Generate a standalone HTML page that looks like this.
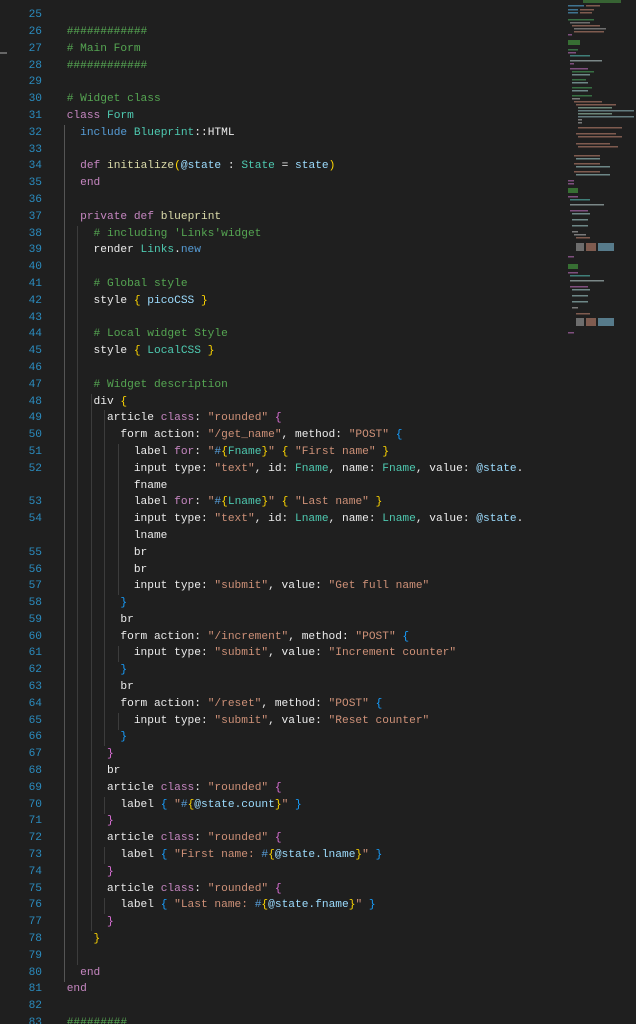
<!DOCTYPE html>
<html><head><meta charset="utf-8">
<style>
html,body{margin:0;padding:0;background:#1f1f1f;width:636px;height:1024px;overflow:hidden}
#wrap{position:relative;width:636px;height:1024px;overflow:hidden;font-family:"Liberation Mono",monospace;font-size:11.2px}
#nums{position:absolute;left:0;top:-9.6px;width:42px;text-align:right;color:#2b8cbf}
#code{position:absolute;left:66.7px;top:-9.6px;color:#ececec}
.r{height:16.8px;line-height:16.8px;white-space:pre}
.c{color:#55a552}.k{color:#c586c0}.t{color:#4ec9b0}.s{color:#ce9178}.f{color:#dcdcaa}
.v{color:#9cdcfe}.b{color:#569cd6}.g{color:#ffd700}.p{color:#da70d6}.u{color:#179fff}
.gd{position:absolute;width:1px;background:#3c3c3c}
</style></head><body><div id="wrap">
<div class="gd" style="left:64px;top:124.8px;height:857px;background:#555"></div>
<div class="gd" style="left:77.4px;top:225.6px;height:739px"></div>
<div class="gd" style="left:90.9px;top:393.6px;height:537.6px"></div>
<div class="gd" style="left:104.3px;top:410.4px;height:336px"></div>
<div class="gd" style="left:104.3px;top:796.8px;height:16.8px"></div>
<div class="gd" style="left:104.3px;top:847.2px;height:16.8px"></div>
<div class="gd" style="left:104.3px;top:897.6px;height:16.8px"></div>
<div class="gd" style="left:117.8px;top:444px;height:151.2px"></div>
<div class="gd" style="left:117.8px;top:645.6px;height:16.8px"></div>
<div class="gd" style="left:117.8px;top:712.8px;height:16.8px"></div>
<div style="position:absolute;left:0;top:52px;width:7px;height:2px;background:#666"></div>
<div id="nums">
<div class="r">24</div><div class="r">25</div><div class="r">26</div><div class="r">27</div><div class="r">28</div><div class="r">29</div><div class="r">30</div><div class="r">31</div><div class="r">32</div><div class="r">33</div><div class="r">34</div><div class="r">35</div><div class="r">36</div><div class="r">37</div><div class="r">38</div><div class="r">39</div><div class="r">40</div><div class="r">41</div><div class="r">42</div><div class="r">43</div><div class="r">44</div><div class="r">45</div><div class="r">46</div><div class="r">47</div><div class="r">48</div><div class="r">49</div><div class="r">50</div><div class="r">51</div><div class="r">52</div><div class="r"></div><div class="r">53</div><div class="r">54</div><div class="r"></div><div class="r">55</div><div class="r">56</div><div class="r">57</div><div class="r">58</div><div class="r">59</div><div class="r">60</div><div class="r">61</div><div class="r">62</div><div class="r">63</div><div class="r">64</div><div class="r">65</div><div class="r">66</div><div class="r">67</div><div class="r">68</div><div class="r">69</div><div class="r">70</div><div class="r">71</div><div class="r">72</div><div class="r">73</div><div class="r">74</div><div class="r">75</div><div class="r">76</div><div class="r">77</div><div class="r">78</div><div class="r">79</div><div class="r">80</div><div class="r">81</div><div class="r">82</div><div class="r">83</div>
</div>
<div id="code">
<div class="r"> </div>
<div class="r"> </div>
<div class="r"><span class="c">############</span></div>
<div class="r"><span class="c"># Main Form</span></div>
<div class="r"><span class="c">############</span></div>
<div class="r"> </div>
<div class="r"><span class="c"># Widget class</span></div>
<div class="r"><span class="k">class</span> <span class="t">Form</span></div>
<div class="r">  <span class="b">include</span> <span class="t">Blueprint</span>::HTML</div>
<div class="r"> </div>
<div class="r">  <span class="k">def</span> <span class="f">initialize</span><span class="g">(</span><span class="v">@state</span> : <span class="t">State</span> = <span class="v">state</span><span class="g">)</span></div>
<div class="r">  <span class="k">end</span></div>
<div class="r"> </div>
<div class="r">  <span class="k">private</span> <span class="k">def</span> <span class="f">blueprint</span></div>
<div class="r">    <span class="c"># including 'Links'widget</span></div>
<div class="r">    render <span class="t">Links</span>.<span class="b">new</span></div>
<div class="r"> </div>
<div class="r">    <span class="c"># Global style</span></div>
<div class="r">    style <span class="g">{</span> <span class="v">picoCSS</span> <span class="g">}</span></div>
<div class="r"> </div>
<div class="r">    <span class="c"># Local widget Style</span></div>
<div class="r">    style <span class="g">{</span> <span class="t">LocalCSS</span> <span class="g">}</span></div>
<div class="r"> </div>
<div class="r">    <span class="c"># Widget description</span></div>
<div class="r">    div <span class="g">{</span></div>
<div class="r">      article <span class="k">class</span>: <span class="s">"rounded"</span> <span class="p">{</span></div>
<div class="r">        form action: <span class="s">"/get_name"</span>, method: <span class="s">"POST"</span> <span class="u">{</span></div>
<div class="r">          label <span class="k">for</span>: <span class="s">"</span><span class="b">#</span><span class="g">{</span><span class="t">Fname</span><span class="g">}</span><span class="s">"</span> <span class="g">{</span> <span class="s">"First name"</span> <span class="g">}</span></div>
<div class="r">          input type: <span class="s">"text"</span>, id: <span class="t">Fname</span>, name: <span class="t">Fname</span>, value: <span class="v">@state</span>.</div>
<div class="r">          fname</div>
<div class="r">          label <span class="k">for</span>: <span class="s">"</span><span class="b">#</span><span class="g">{</span><span class="t">Lname</span><span class="g">}</span><span class="s">"</span> <span class="g">{</span> <span class="s">"Last name"</span> <span class="g">}</span></div>
<div class="r">          input type: <span class="s">"text"</span>, id: <span class="t">Lname</span>, name: <span class="t">Lname</span>, value: <span class="v">@state</span>.</div>
<div class="r">          lname</div>
<div class="r">          br</div>
<div class="r">          br</div>
<div class="r">          input type: <span class="s">"submit"</span>, value: <span class="s">"Get full name"</span></div>
<div class="r">        <span class="u">}</span></div>
<div class="r">        br</div>
<div class="r">        form action: <span class="s">"/increment"</span>, method: <span class="s">"POST"</span> <span class="u">{</span></div>
<div class="r">          input type: <span class="s">"submit"</span>, value: <span class="s">"Increment counter"</span></div>
<div class="r">        <span class="u">}</span></div>
<div class="r">        br</div>
<div class="r">        form action: <span class="s">"/reset"</span>, method: <span class="s">"POST"</span> <span class="u">{</span></div>
<div class="r">          input type: <span class="s">"submit"</span>, value: <span class="s">"Reset counter"</span></div>
<div class="r">        <span class="u">}</span></div>
<div class="r">      <span class="p">}</span></div>
<div class="r">      br</div>
<div class="r">      article <span class="k">class</span>: <span class="s">"rounded"</span> <span class="p">{</span></div>
<div class="r">        label <span class="u">{</span> <span class="s">"</span><span class="b">#</span><span class="g">{</span><span class="v">@state.count</span><span class="g">}</span><span class="s">"</span> <span class="u">}</span></div>
<div class="r">      <span class="p">}</span></div>
<div class="r">      article <span class="k">class</span>: <span class="s">"rounded"</span> <span class="p">{</span></div>
<div class="r">        label <span class="u">{</span> <span class="s">"First name: </span><span class="b">#</span><span class="g">{</span><span class="v">@state.lname</span><span class="g">}</span><span class="s">"</span> <span class="u">}</span></div>
<div class="r">      <span class="p">}</span></div>
<div class="r">      article <span class="k">class</span>: <span class="s">"rounded"</span> <span class="p">{</span></div>
<div class="r">        label <span class="u">{</span> <span class="s">"Last name: </span><span class="b">#</span><span class="g">{</span><span class="v">@state.fname</span><span class="g">}</span><span class="s">"</span> <span class="u">}</span></div>
<div class="r">      <span class="p">}</span></div>
<div class="r">    <span class="g">}</span></div>
<div class="r"> </div>
<div class="r">  <span class="k">end</span></div>
<div class="r"><span class="k">end</span></div>
<div class="r"> </div>
<div class="r"><span class="c">#########</span></div>
</div>
<svg style="position:absolute;left:566px;top:0" width="70" height="340">
<g opacity="0.75">
<rect x="17" y="0" width="38" height="3" fill="#3f7a3a"/>
<rect x="2" y="5" width="16" height="1.5" fill="#4a8fb8"/><rect x="20" y="5" width="14" height="1.5" fill="#a07060"/>
<rect x="2" y="9" width="10" height="1.5" fill="#4a8fb8"/><rect x="14" y="9" width="14" height="1.5" fill="#a07060"/>
<rect x="2" y="12" width="10" height="1.5" fill="#4a8fb8"/><rect x="14" y="12" width="12" height="1.5" fill="#a07060"/>
<rect x="2" y="19" width="26" height="1.5" fill="#3f8a50"/>
<rect x="4" y="22" width="20" height="1.5" fill="#888"/><rect x="6" y="25" width="28" height="1.5" fill="#a07060"/><rect x="8" y="28" width="32" height="1.5" fill="#8a8a8a"/><rect x="8" y="31" width="30" height="1.5" fill="#a07060"/><rect x="2" y="34" width="4" height="1.5" fill="#a060a0"/>
<rect x="2" y="40" width="12" height="5" fill="#3f8a3a"/>
<rect x="2" y="49" width="10" height="1.5" fill="#3f8a50"/><rect x="2" y="52" width="8" height="1.5" fill="#a060a0"/><rect x="4" y="55" width="20" height="1.5" fill="#4aa098"/>
<rect x="4" y="60" width="32" height="1.5" fill="#9aa"/><rect x="4" y="63" width="4" height="1.5" fill="#a060a0"/>
<rect x="4" y="68" width="18" height="1.5" fill="#a060a0"/><rect x="6" y="71" width="22" height="1.5" fill="#3f8a50"/><rect x="6" y="74" width="18" height="1.5" fill="#8aa"/>
<rect x="6" y="79" width="14" height="1.5" fill="#3f8a50"/><rect x="6" y="82" width="16" height="1.5" fill="#8aa"/>
<rect x="6" y="87" width="20" height="1.5" fill="#3f8a50"/><rect x="6" y="90" width="16" height="1.5" fill="#8aa"/>
<rect x="6" y="95" width="20" height="1.5" fill="#3f8a50"/><rect x="6" y="98" width="8" height="1.5" fill="#999"/>
<rect x="8" y="101" width="28" height="1.5" fill="#a07060"/><rect x="10" y="104" width="40" height="1.5" fill="#a07060"/><rect x="12" y="107" width="34" height="1.5" fill="#8a9"/><rect x="12" y="110" width="56" height="1.5" fill="#7a9aa0"/><rect x="12" y="113" width="34" height="1.5" fill="#8a9"/><rect x="12" y="116" width="56" height="1.5" fill="#7a9aa0"/><rect x="12" y="119" width="4" height="1.5" fill="#999"/><rect x="12" y="122" width="4" height="1.5" fill="#999"/><rect x="12" y="127" width="44" height="1.5" fill="#a07060"/>
<rect x="10" y="133" width="40" height="1.5" fill="#a07060"/><rect x="12" y="136" width="44" height="1.5" fill="#a07060"/>
<rect x="10" y="143" width="34" height="1.5" fill="#a07060"/><rect x="12" y="146" width="40" height="1.5" fill="#a07060"/>
<rect x="8" y="155" width="26" height="1.5" fill="#a07060"/><rect x="10" y="158" width="24" height="1.5" fill="#8aa"/>
<rect x="8" y="163" width="26" height="1.5" fill="#a07060"/><rect x="10" y="166" width="34" height="1.5" fill="#8aa"/>
<rect x="8" y="171" width="26" height="1.5" fill="#a07060"/><rect x="10" y="174" width="34" height="1.5" fill="#8aa"/>
<rect x="2" y="180" width="6" height="1.5" fill="#a060a0"/><rect x="2" y="183" width="6" height="1.5" fill="#a060a0"/>
<rect x="2" y="188" width="10" height="5" fill="#3f8a3a"/>
<rect x="2" y="196" width="10" height="1.5" fill="#a060a0"/><rect x="4" y="199" width="20" height="1.5" fill="#4aa098"/><rect x="4" y="204" width="34" height="1.5" fill="#9aa"/>
<rect x="4" y="210" width="18" height="1.5" fill="#a060a0"/><rect x="6" y="213" width="18" height="1.5" fill="#8aa"/><rect x="6" y="219" width="16" height="1.5" fill="#8aa"/><rect x="6" y="225" width="16" height="1.5" fill="#8aa"/>
<rect x="6" y="231" width="6" height="1.5" fill="#999"/><rect x="8" y="234" width="12" height="1.5" fill="#999"/><rect x="10" y="237" width="14" height="1.5" fill="#a07060"/>
<rect x="10" y="243" width="8" height="8" fill="#888"/><rect x="20" y="243" width="10" height="8" fill="#a07060"/><rect x="32" y="243" width="16" height="8" fill="#6a9ab0"/>
<rect x="2" y="256" width="6" height="1.5" fill="#a060a0"/>
<rect x="2" y="264" width="10" height="5" fill="#3f8a3a"/>
<rect x="2" y="272" width="10" height="1.5" fill="#a060a0"/><rect x="4" y="275" width="20" height="1.5" fill="#4aa098"/><rect x="4" y="280" width="34" height="1.5" fill="#9aa"/>
<rect x="4" y="286" width="18" height="1.5" fill="#a060a0"/><rect x="6" y="289" width="18" height="1.5" fill="#8aa"/><rect x="6" y="295" width="16" height="1.5" fill="#8aa"/><rect x="6" y="301" width="16" height="1.5" fill="#8aa"/>
<rect x="6" y="307" width="6" height="1.5" fill="#999"/><rect x="10" y="313" width="14" height="1.5" fill="#a07060"/>
<rect x="10" y="318" width="8" height="8" fill="#888"/><rect x="20" y="318" width="10" height="8" fill="#a07060"/><rect x="32" y="318" width="16" height="8" fill="#6a9ab0"/>
<rect x="2" y="332" width="6" height="1.5" fill="#a060a0"/>
</g>
</svg>
</div></body></html>
